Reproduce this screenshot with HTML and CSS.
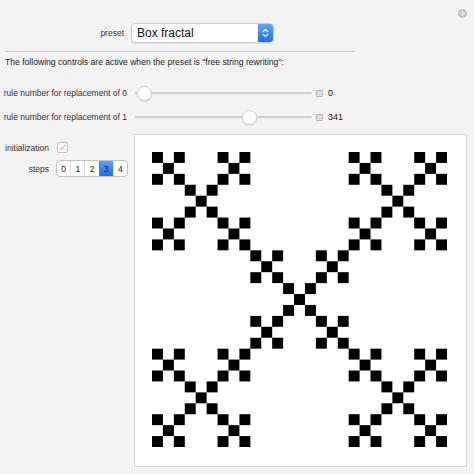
FILE: index.html
```html
<!DOCTYPE html>
<html lang="en">
  <head>
    <meta charset="UTF-8" />
    <meta name="viewport" content="width=device-width, initial-scale=1" />
    <title>Box Fractal</title>
    <link rel="stylesheet" href="styles.css">
  </head>
  <body>
    <div class="manipulate">
      <span class="add-btn" aria-label="Add"></span>

      <div class="preset-row">
        <span class="preset-label">preset</span>
        <div class="popup">
          <span class="popup-text">Box fractal</span>
          <span class="popup-arrows">
            <svg width="7" height="12" viewBox="0 0 7 12">
              <path d="M1.2 4.6 L3.5 2.3 L5.8 4.6 M1.2 7.4 L3.5 9.7 L5.8 7.4" fill="none" stroke="#fff" stroke-width="1.2" stroke-linecap="round" stroke-linejoin="round" />
            </svg>
          </span>
        </div>
      </div>

      <hr class="divider">
      <p class="note">The following controls are active when the preset is "free string rewriting":</p>

      <div class="sliders">
        <div class="slider-row">
          <span class="slider-label">rule number for replacement of 0</span>
          <div class="slider"><span class="thumb" style="--v: 0"></span></div>
          <span class="expand"></span>
          <span class="value">0</span>
        </div>
        <div class="slider-row">
          <span class="slider-label">rule number for replacement of 1</span>
          <div class="slider"><span class="thumb" style="--v: 0.6673"></span></div>
          <span class="expand"></span>
          <span class="value">341</span>
        </div>
      </div>

      <div class="lower">
        <div class="options">
          <span class="opt-label">initialization</span>
          <span class="checkbox">
            <svg width="9" height="9" viewBox="0 0 9 9">
              <path d="M1.8 4.8 L3.6 6.8 L7.4 1.6" fill="none" stroke="#a8a8a8" stroke-width="1" />
            </svg>
          </span>
          <span class="opt-label">steps</span>
          <div class="setter">
            <span>0</span>
            <span>1</span>
            <span>2</span>
            <span class="on">3</span>
            <span>4</span>
          </div>
        </div>

        <div class="plot">
          <!-- box fractal, three levels: each level puts the previous one on the corners and centre of a 3x3 grid -->
          <svg width="295" height="295" viewBox="0 0 27 27">
            <defs>
              <g id="lvl1">
                <rect x="0" y="0" width="1" height="1" />
                <rect x="2" y="0" width="1" height="1" />
                <rect x="1" y="1" width="1" height="1" />
                <rect x="0" y="2" width="1" height="1" />
                <rect x="2" y="2" width="1" height="1" />
              </g>
              <g id="lvl2">
                <use href="#lvl1" />
                <use href="#lvl1" x="6" />
                <use href="#lvl1" x="3" y="3" />
                <use href="#lvl1" y="6" />
                <use href="#lvl1" x="6" y="6" />
              </g>
            </defs>
            <use href="#lvl2" />
            <use href="#lvl2" x="18" />
            <use href="#lvl2" x="9" y="9" />
            <use href="#lvl2" y="18" />
            <use href="#lvl2" x="18" y="18" />
          </svg>
        </div>
      </div>
    </div>
  </body>
</html>
```

FILE: styles.css
```css
* {
  margin: 0;
  padding: 0;
  box-sizing: border-box;
  font-family: "Liberation Sans", Arial, sans-serif;
}
body {
  background: #f3f3f3;
  color: #333;
}

.manipulate {
  position: relative;
  width: 474px;
  height: 474px;
  padding-top: 23px;
}

/* little round "+" in the corner */
.add-btn {
  position: absolute;
  top: 9px;
  right: 7px;
  width: 9px;
  height: 9px;
  border-radius: 50%;
  background: #c4c4c4;
}
.add-btn::before,
.add-btn::after {
  content: "";
  position: absolute;
  background: #f3f3f3;
}
.add-btn::before {
  left: 2px;
  top: 4px;
  width: 5px;
  height: 1px;
}
.add-btn::after {
  left: 4px;
  top: 2px;
  width: 1px;
  height: 5px;
}

/* Preset popup */
.preset-row {
  display: flex;
  align-items: center;
  height: 20px;
}
.preset-label {
  width: 131px;
  text-align: right;
  font-size: 8.5px;
  color: #333;
  padding-right: 7px;
}
.popup {
  width: 143px;
  height: 20px;
  display: flex;
  align-items: center;
  background: #fff;
  border: 1px solid #cdcdcd;
  border-radius: 4px;
  box-shadow: 0 1px 1px rgba(0, 0, 0, 0.08);
  overflow: hidden;
}
.popup-text {
  flex-grow: 1;
  font-size: 12px;
  color: #111;
  padding-left: 5px;
}
.popup-arrows {
  width: 15px;
  height: 100%;
  display: flex;
  align-items: center;
  justify-content: center;
  background: linear-gradient(#62a6f8, #1a6fe6);
}

.divider {
  border: none;
  border-top: 1px solid #c9c9c9;
  width: 350px;
  margin: 8px 0 0 5px;
}
.note {
  font-size: 8.6px;
  line-height: 11px;
  color: #222;
  margin: 5px 0 0 5px;
}

/* Sliders */
.sliders {
  margin-top: 13px;
}
.slider-row {
  display: flex;
  align-items: center;
  height: 24px;
}
.slider-label {
  width: 127px;
  text-align: right;
  font-size: 8.5px;
  color: #333;
  margin-right: 8px;
}
.slider {
  position: relative;
  width: 177px;
  height: 15px;
}
.slider::before {
  content: "";
  position: absolute;
  left: 0;
  right: 0;
  top: 6px;
  height: 2px;
  border-radius: 1px;
  background: #cfcfcf;
}
.thumb {
  position: absolute;
  top: 0;
  left: calc(2px + var(--v) * (100% - 19px));
  width: 15px;
  height: 15px;
  border-radius: 50%;
  background: #fff;
  border: 1px solid #d2d2d2;
  box-shadow: 0 1px 1px rgba(0, 0, 0, 0.12);
}
.expand {
  width: 7px;
  height: 7px;
  margin-left: 4px;
  border: 1px solid #b9b9b9;
  border-radius: 1px;
  background: #e2e2e2;
}
.value {
  font-size: 9px;
  color: #222;
  margin-left: 5px;
}

/* Lower part: options + graphic */
.lower {
  display: flex;
  margin-top: 5px;
}
.options {
  width: 134px;
  display: grid;
  grid-template-columns: 49px auto;
  grid-template-rows: 11px 17px;
  column-gap: 7px;
  row-gap: 7px;
  align-items: center;
  align-content: start;
  padding-top: 8px;
}
.opt-label {
  text-align: right;
  font-size: 8.5px;
  color: #333;
}
.checkbox {
  width: 11px;
  height: 11px;
  margin-left: 1px;
  display: flex;
  align-items: center;
  justify-content: center;
  background: #fafafa;
  border: 1px solid #c4c4c4;
  border-radius: 2px;
}
.setter {
  display: flex;
  width: 72px;
  height: 17px;
  background: #fff;
  border: 1px solid #c3c3c3;
  border-radius: 4px;
  overflow: hidden;
}
.setter span {
  flex: 1;
  display: flex;
  align-items: center;
  justify-content: center;
  font-size: 8.5px;
  color: #222;
  border-left: 1px solid #dedede;
}
.setter span:first-child {
  border-left: none;
}
.setter span.on {
  background: linear-gradient(#5aa2f8, #1b6fe4);
  color: #0c2c5c;
  border-left-color: #3b86ee;
}

.plot {
  width: 333px;
  height: 333px;
  background: #fff;
  border: 1px solid #d6d6d6;
  padding: 17px 0 0 17px;
}
.plot svg {
  display: block;
  fill: #000;
}
```
